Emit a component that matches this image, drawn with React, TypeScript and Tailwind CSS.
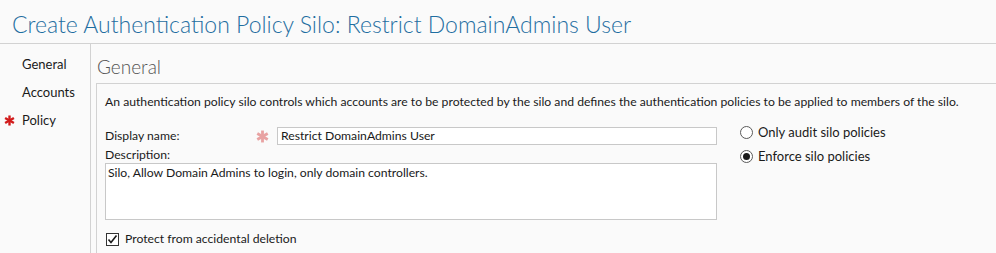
import React from 'react';

const navItems = [
  { label: 'General', required: false },
  { label: 'Accounts', required: false },
  { label: 'Policy', required: true },
];

const Asterisk: React.FC<{ color: string; size: number }> = ({ color, size }) => (
  <svg width={size} height={size} viewBox="0 0 12 12">
    <g stroke={color} strokeWidth="2.6" strokeLinecap="butt">
      <line x1="6" y1="0.5" x2="6" y2="11.5" />
      <line x1="1.2" y1="3.2" x2="10.8" y2="8.8" />
      <line x1="1.2" y1="8.8" x2="10.8" y2="3.2" />
    </g>
  </svg>
);

const Radio: React.FC<{ checked?: boolean; label: string }> = ({ checked, label }) => (
  <div className="flex items-center h-[16px] text-[13px]">
    <span className="w-[13px] h-[13px] rounded-full border border-[#5a5a5a] bg-white flex items-center justify-center">
      {checked && <span className="w-[7px] h-[7px] rounded-full bg-[#1a1a1a]" />}
    </span>
    <span className="ml-[5px]">{label}</span>
  </div>
);

const App: React.FC = () => {
  return (
    <div
      className="w-[996px] h-[253px] overflow-hidden bg-[#fafafa] text-[#1a1a1a] text-[12.2px] leading-[16px]"
      style={{ fontFamily: 'Lato, "Liberation Sans", sans-serif' }}
    >
      {/* Title */}
      <div className="h-[44px] border-b border-[#d2d2d2] pl-[12px] pt-[8px]">
        <h1 className="text-[23px] leading-[32px] font-light text-[#1f6ea1] whitespace-nowrap">
          Create Authentication Policy Silo: Restrict DomainAdmins User
        </h1>
      </div>

      <div className="flex h-[209px]">
        {/* Left nav */}
        <div className="w-[91px] border-r border-[#d2d2d2] pt-[6px] shrink-0">
          {navItems.map((item) => (
            <div key={item.label} className="relative h-[28px] pl-[22px] flex items-center text-[13px]">
              {item.required && (
                <span className="absolute left-[4px] top-[9px]">
                  <Asterisk color="#d11b1b" size={11} />
                </span>
              )}
              {item.label}
            </div>
          ))}
        </div>

        {/* Main */}
        <div className="flex-1 pl-[5px]">
          <div className="h-[39px] pl-[1px] pt-[11px]">
            <h2 className="text-[19px] leading-[24px] font-light text-[#555]">General</h2>
          </div>

          <div className="border-l border-t border-[#d2d2d2] h-[200px] pl-[8px] pt-[10px]">
            <p className="whitespace-nowrap">
              An authentication policy silo controls which accounts are to be protected by the silo and defines the
              authentication policies to be applied to members of the silo.
            </p>

            <div className="flex mt-[14px]">
              <div className="w-[612px] pt-[3px]">
                <div className="flex items-center h-[18px]">
                  <span className="w-[151px]">Display name:</span>
                  <span className="w-[21px] flex items-center">
                    <Asterisk color="#e8a2a2" size={13} />
                  </span>
                  <div className="flex-1 h-[18px] border border-[#c8c8c8] bg-white px-[3px] leading-[16px]">
                    Restrict DomainAdmins User
                  </div>
                </div>
                <div className="mt-[2px] h-[16px]">Description:</div>
                <div className="h-[57px] border border-[#c8c8c8] bg-white px-[2px] pt-[1px]">
                  Silo, Allow Domain Admins to login, only domain controllers.
                </div>
                <div className="flex items-center mt-[11px]">
                  <span className="w-[13px] h-[13px] ml-[1px] border border-[#333] bg-white flex items-center justify-center">
                    <svg width="11" height="11" viewBox="0 0 11 11">
                      <path d="M1.5 5.5 L4 8.5 L9.5 1.5" fill="none" stroke="#1a1a1a" strokeWidth="1.6" />
                    </svg>
                  </span>
                  <span className="ml-[6px]">Protect from accidental deletion</span>
                </div>
              </div>

              <div className="ml-[23px] flex flex-col gap-[8px]">
                <Radio label="Only audit silo policies" />
                <Radio checked label="Enforce silo policies" />
              </div>
            </div>
          </div>
        </div>
      </div>
    </div>
  );
};

export default App;
